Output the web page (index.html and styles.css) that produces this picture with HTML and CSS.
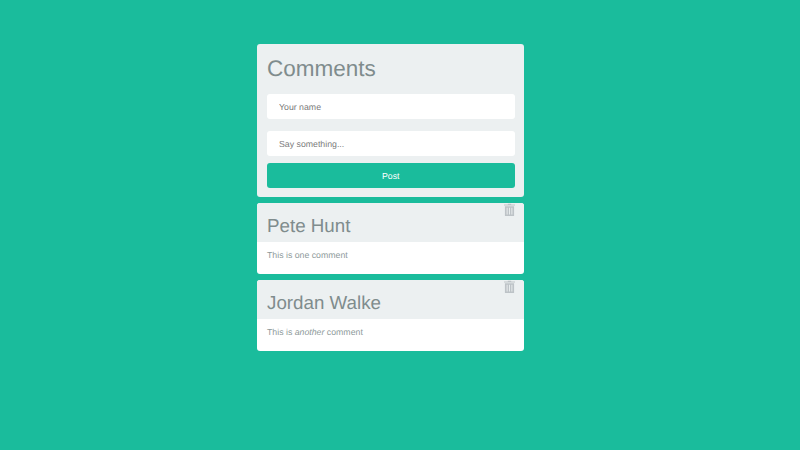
FILE: index.html
```html
<!DOCTYPE html>
<html lang="en">
<head>
  <meta charset="UTF-8">
  <title>Comments</title>
  <link rel="stylesheet" href="styles.css">
</head>
<body>
  <div class="container">
    <form class="comment-form">
      <h1>Comments</h1>
      <input class="field field-name" type="text" placeholder="Your name">
      <input class="field field-text" type="text" placeholder="Say something...">
      <button class="post-button" type="button">Post</button>
    </form>

    <div class="comment">
      <div class="comment-head">
        <h2>Pete Hunt</h2>
        <svg class="trash" viewBox="0 0 12 14" width="11" height="13">
          <path d="M4.2 1.5V.6h3.6v.9H12v1.2H0V1.5z"/>
          <path fill-rule="evenodd" d="M1 3.4h10V14H1zM2.9 5v7.4h1V5zm2.6 0v7.4h1V5zm2.6 0v7.4h1V5z"/>
        </svg>
      </div>
      <p>This is one comment</p>
    </div>

    <div class="comment">
      <div class="comment-head">
        <h2>Jordan Walke</h2>
        <svg class="trash" viewBox="0 0 12 14" width="11" height="13">
          <path d="M4.2 1.5V.6h3.6v.9H12v1.2H0V1.5z"/>
          <path fill-rule="evenodd" d="M1 3.4h10V14H1zM2.9 5v7.4h1V5zm2.6 0v7.4h1V5zm2.6 0v7.4h1V5z"/>
        </svg>
      </div>
      <p>This is <em>another</em> comment</p>
    </div>
  </div>
</body>
</html>
```

FILE: styles.css
```css
body {
  font-family: "Liberation Sans", Arial, sans-serif;
  background-color: #1abc9c;
  color: #7f8c8d;
  text-rendering: geometricPrecision;
  margin: 0;
  padding: 0;
}

.container {
  width: 267px;
  margin-left: 257px;
  padding-top: 44px;
  display: flex;
  flex-direction: column;
  gap: 6px;
}

.comment-form {
  display: flex;
  flex-direction: column;
  background-color: #ecf0f1;
  border-radius: 3px;
  padding: 11px 9.5px 9px 10px;
}

h1 {
  font-size: 22.5px;
  font-weight: normal;
  line-height: 28px;
  margin: 0 0 11px;
}

.field {
  height: 25px;
  box-sizing: border-box;
  border: none;
  border-radius: 3px;
  background-color: #fff;
  padding: 0 12px;
  font-family: inherit;
  font-size: 8.75px;
  text-rendering: geometricPrecision;
  color: #7f8c8d;
}

.field::placeholder {
  color: #7a7a7a;
  opacity: 1;
}

.field-name {
  margin-bottom: 12px;
}

.field-text {
  margin-bottom: 7px;
}

.post-button {
  height: 25px;
  border: none;
  border-radius: 3px;
  background-color: #1abc9c;
  color: #fff;
  font-family: inherit;
  font-size: 8.75px;
  text-rendering: geometricPrecision;
  cursor: pointer;
}

.comment {
  background-color: #fff;
  border-radius: 3px;
  overflow: hidden;
  height: 71px;
}

.comment-head {
  position: relative;
  background-color: #ecf0f1;
  height: 39px;
  padding-left: 10px;
}

h2 {
  font-size: 18.75px;
  font-weight: normal;
  line-height: 24px;
  margin: 0;
  padding-top: 11px;
}

.trash {
  position: absolute;
  top: 0;
  right: 9px;
  fill: #bdc3c7;
}

.comment p {
  font-size: 8.75px;
  line-height: 14px;
  color: #8d999a;
  margin: 0;
  padding: 6px 10px;
}
```
